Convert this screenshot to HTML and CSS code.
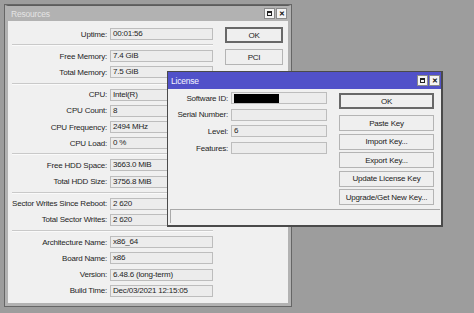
FILE: index.html
```html
<!DOCTYPE html>
<html lang="en">
<head>
    <meta charset="UTF-8">
    <title>Resources / License</title>
    <link rel="stylesheet" href="styles.css">
</head>
<body>
    <div class="desktop">
        <div class="window resources">
            <div class="titlebar">
                <span class="title">Resources</span>
                <div class="title-btns">
                    <span class="tbtn max"></span>
                    <span class="tbtn close">&#x2715;</span>
                </div>
            </div>
            <div class="win-body">
                <div class="form">
                    <div class="row"><label>Uptime:</label><div class="field">00:01:56</div></div>
                    <div class="sep"></div>
                    <div class="row"><label>Free Memory:</label><div class="field">7.4 GiB</div></div>
                    <div class="row"><label>Total Memory:</label><div class="field">7.5 GiB</div></div>
                    <div class="sep"></div>
                    <div class="row"><label>CPU:</label><div class="field">Intel(R)</div></div>
                    <div class="row"><label>CPU Count:</label><div class="field">8</div></div>
                    <div class="row"><label>CPU Frequency:</label><div class="field">2494 MHz</div></div>
                    <div class="row"><label>CPU Load:</label><div class="field">0 %</div></div>
                    <div class="sep"></div>
                    <div class="row"><label>Free HDD Space:</label><div class="field">3663.0 MiB</div></div>
                    <div class="row"><label>Total HDD Size:</label><div class="field">3756.8 MiB</div></div>
                    <div class="sep"></div>
                    <div class="row"><label>Sector Writes Since Reboot:</label><div class="field">2 620</div></div>
                    <div class="row"><label>Total Sector Writes:</label><div class="field">2 620</div></div>
                    <div class="sep"></div>
                    <div class="row"><label>Architecture Name:</label><div class="field">x86_64</div></div>
                    <div class="row"><label>Board Name:</label><div class="field">x86</div></div>
                    <div class="row"><label>Version:</label><div class="field">6.48.6 (long-term)</div></div>
                    <div class="row"><label>Build Time:</label><div class="field">Dec/03/2021 12:15:05</div></div>
                </div>
                <div class="buttons">
                    <button class="btn default">OK</button>
                    <button class="btn">PCI</button>
                    <button class="btn">USB</button>
                </div>
            </div>
        </div>

        <div class="window license">
            <div class="titlebar">
                <span class="title">License</span>
                <div class="title-btns">
                    <span class="tbtn max"></span>
                    <span class="tbtn close">&#x2715;</span>
                </div>
            </div>
            <div class="win-body">
                <div class="form">
                    <div class="row"><label>Software ID:</label><div class="field"><span class="redacted"></span></div></div>
                    <div class="row"><label>Serial Number:</label><div class="field"></div></div>
                    <div class="row"><label>Level:</label><div class="field">6</div></div>
                    <div class="row"><label>Features:</label><div class="field"></div></div>
                </div>
                <div class="buttons">
                    <button class="btn default">OK</button>
                    <button class="btn">Paste Key</button>
                    <button class="btn">Import Key...</button>
                    <button class="btn">Export Key...</button>
                    <button class="btn">Update License Key</button>
                    <button class="btn">Upgrade/Get New Key...</button>
                </div>
            </div>
            <div class="statusbar"></div>
        </div>
    </div>
</body>
</html>
```

FILE: styles.css
```css
body {
    margin: 0;
    font-family: "Liberation Sans", Arial, sans-serif;
    font-size: 8px;
    letter-spacing: -0.2px;
    color: #1e1e1e;
}
.desktop {
    position: relative;
    width: 474px;
    height: 313px;
    background-color: #9d9d9d;
    overflow: hidden;
}
.window {
    position: absolute;
    display: flex;
    flex-direction: column;
    background-color: #f0f0f0;
    border: 1px solid #5c5c5c;
    box-sizing: border-box;
}
.titlebar {
    display: flex;
    align-items: center;
    justify-content: space-between;
    padding: 0 1px 0 3px;
    flex-shrink: 0;
}
.title {
    font-size: 8.5px;
}
.title-btns {
    display: flex;
    gap: 1px;
}
.tbtn {
    display: flex;
    align-items: center;
    justify-content: center;
    width: 9px;
    height: 9px;
    background-color: #f4f4f4;
    border: 1px solid #8a8a8a;
    font-size: 7px;
    font-weight: bold;
    color: #111;
    line-height: 1;
    letter-spacing: 0;
}
.tbtn.max::after {
    content: "";
    width: 5px;
    height: 5px;
    border: 1px solid #222;
    border-top-width: 2px;
    box-sizing: border-box;
}
.win-body {
    display: flex;
    align-items: flex-start;
}
.form {
    display: flex;
    flex-direction: column;
}
.row {
    display: flex;
    align-items: center;
    gap: 3px;
    height: 16.2px;
}
.row label {
    text-align: right;
    white-space: nowrap;
}
.field {
    height: 12px;
    line-height: 12px;
    padding-left: 2px;
    border: 1px solid #bdbdbd;
    background-color: #ececec;
    box-sizing: border-box;
    white-space: nowrap;
    overflow: hidden;
    display: flex;
    align-items: center;
}
.sep {
    height: 6px;
    margin-left: 4px;
    display: flex;
    align-items: center;
}
.sep::after {
    content: "";
    flex: 1;
    height: 1px;
    background-color: #c9c9c9;
    border-bottom: 1px solid #fafafa;
}
.buttons {
    display: flex;
    flex-direction: column;
}
.btn {
    height: 16px;
    padding: 0;
    font-family: inherit;
    font-size: 8px;
    letter-spacing: -0.2px;
    color: #222;
    background-color: #efefef;
    border: 1px solid #b4b4b4;
    border-radius: 0;
}
.btn.default {
    border: 2px solid #686868;
}

/* Resources window */
.resources {
    left: 5px;
    top: 5px;
    width: 286px;
    height: 301px;
    border-width: 1px;
    border-left: 3px solid #b2b2b2;
    border-right: 3px solid #b2b2b2;
    border-bottom: 3px solid #b2b2b2;
    outline: 1px solid #666;
}
.resources .titlebar {
    height: 15px;
    background-color: #b2b2b2;
    color: #e4e4e4;
}
.resources .win-body {
    padding-top: 5px;
}
.resources .row label {
    width: 99px;
}
.resources .field {
    width: 103px;
}
.resources .sep {
    width: 201px;
}
.resources .buttons {
    margin-left: 12px;
    margin-top: 1px;
    gap: 6px;
}
.resources .btn {
    width: 58px;
}

/* License window */
.license {
    left: 167px;
    top: 71px;
    width: 276px;
    height: 156px;
    border: 1px solid #4a4a4a;
    border-right-width: 2px;
    border-bottom-width: 2px;
}
.license .titlebar {
    height: 17px;
    background-color: #5151c9;
    color: #f4f4ff;
}
.license .win-body {
    padding-top: 1px;
}
.license .row {
    height: 16.6px;
}
.license .row label {
    width: 60px;
}
.license .field {
    width: 96px;
}
.redacted {
    display: block;
    width: 45px;
    height: 9px;
    background-color: #000;
}
.license .buttons {
    margin-left: 12px;
    margin-top: 3px;
    gap: 2.5px;
}
.license .btn {
    width: 95px;
}
.license .btn.default {
    margin-bottom: 3.5px;
}
.statusbar {
    margin: auto 1px 2px 2px;
    height: 13px;
    border-top: 1px solid #a9a9a9;
    border-left: 1px solid #a9a9a9;
}
```
